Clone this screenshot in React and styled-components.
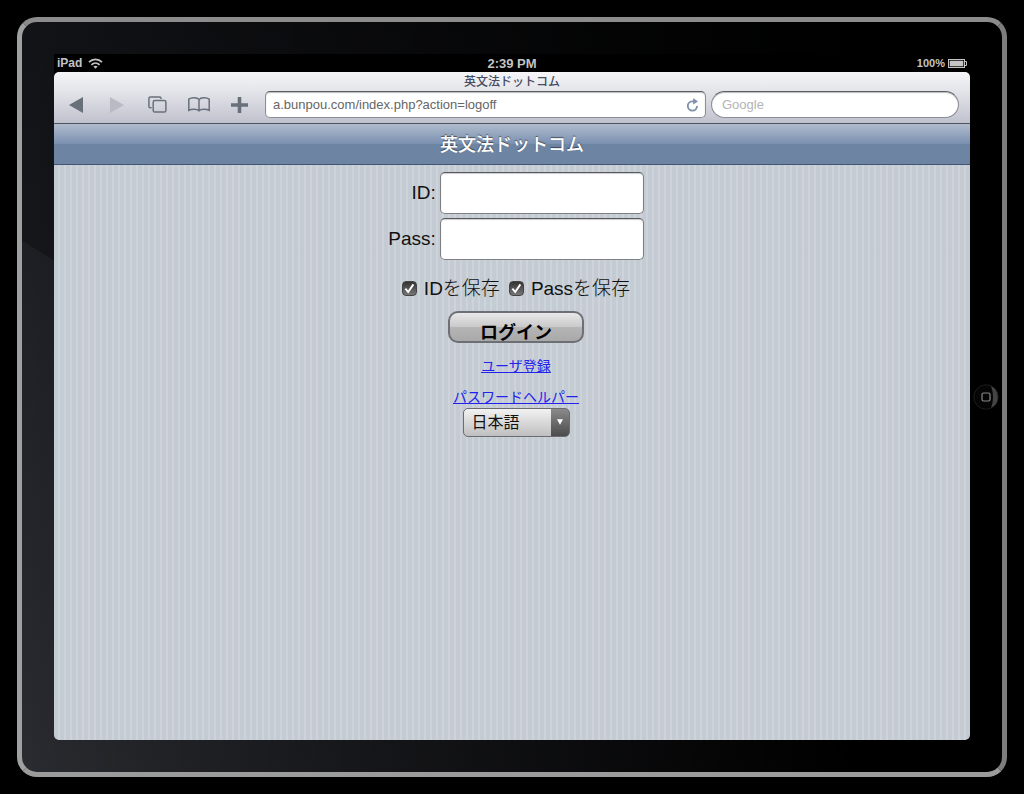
import React, { useState } from 'react'
import styled, { createGlobalStyle } from 'styled-components'

const SANS = '"Liberation Sans", "Noto Sans CJK JP", sans-serif'

const GlobalStyle = createGlobalStyle`
  * { box-sizing: border-box; }
  html, body, #root { height: 100%; }
  body {
    margin: 0;
    background: #000;
    font-family: ${SANS};
  }
`

/* Toolbar drawings */
const WifiIcon = () => (
  <svg width="15" height="11" viewBox="0 0 15 11" fill="none" stroke="#c4c4c4" strokeWidth="1.7">
    <path d="M1 4.2C4.6 0.5 10.4 0.5 14 4.2" />
    <path d="M3.4 6.8C5.8 4.4 9.2 4.4 11.6 6.8" />
    <path d="M5.4 8.6C6.6 7.5 8.4 7.5 9.6 8.6L7.5 10.8Z" fill="#c4c4c4" stroke="none" />
  </svg>
)

const BatteryIcon = () => (
  <svg width="19" height="9" viewBox="0 0 19 9">
    <rect x="0.5" y="0.5" width="16" height="8" fill="none" stroke="#c4c4c4" />
    <rect x="1.7" y="1.7" width="13.6" height="5.6" fill="#c4c4c4" />
    <path d="M17 2.5h1.5v4H17" fill="none" stroke="#c4c4c4" />
  </svg>
)

const BackIcon = () => (
  <svg width="14" height="16" viewBox="0 0 14 16"><path d="M0 8L14 0V16Z" fill="#68707a" /></svg>
)

const ForwardIcon = () => (
  <svg width="14" height="16" viewBox="0 0 14 16"><path d="M14 8L0 0V16Z" fill="#b8bbc3" /></svg>
)

const PagesIcon = () => (
  <svg width="19" height="17" viewBox="0 0 19 17" fill="none" stroke="#68707a" strokeWidth="1.5">
    <path d="M3.6 11.8H2.4Q0.9 11.8 0.9 10.3V2.4Q0.9 0.9 2.4 0.9H11.5Q13 0.9 13 2.4V3" />
    <rect x="5.2" y="4.6" width="12.7" height="11.4" rx="1.6" />
  </svg>
)

const BookIcon = () => (
  <svg width="22" height="15" viewBox="0 0 22 15" fill="none" stroke="#68707a" strokeWidth="1.5">
    <path d="M11 2.6C9.4 0.4 3.6 0.2 0.8 2.2V13.4C3.6 11.7 9.4 11.7 11 13.8C12.6 11.7 18.4 11.7 21.2 13.4V2.2C18.4 0.2 12.6 0.4 11 2.6ZM11 2.4V13.4" />
  </svg>
)

const PlusIcon = () => (
  <svg width="17" height="16" viewBox="0 0 17 16"><path d="M6.7 0h3.6v6.2H17v3.6h-6.7V16H6.7V9.8H0V6.2h6.7Z" fill="#68707a" /></svg>
)

const ReloadIcon = () => (
  <svg width="13" height="14" viewBox="0 0 13 14">
    <path d="M8.4 3.4H6.2A4.6 4.6 0 1 0 11 8" fill="none" stroke="#7e92ad" strokeWidth="1.9" />
    <path d="M7.2 0L12 3.4L7.2 6.4Z" fill="#7e92ad" />
  </svg>
)

const tools = [
  { name: 'Back', icon: <BackIcon /> },
  { name: 'Forward', icon: <ForwardIcon /> },
  { name: 'Pages', icon: <PagesIcon /> },
  { name: 'Bookmarks', icon: <BookIcon /> },
  { name: 'Add', icon: <PlusIcon /> },
]

export default function App() {
  const [saveId, setSaveId] = useState(true)
  const [savePass, setSavePass] = useState(true)

  return (
    <Desk>
      <GlobalStyle />
      <Tablet>
        <Screen>
          <StatusBar>
            <StatusGroup>iPad <WifiIcon /></StatusGroup>
            <Clock>2:39 PM</Clock>
            <StatusGroup $end>100% <BatteryIcon /></StatusGroup>
          </StatusBar>
          <Browser>
            <BrowserBar>
              <PageTitle>英文法ドットコム</PageTitle>
              <Toolbar>
                <Tools>
                  {tools.map(t => (
                    <ToolButton key={t.name} aria-label={t.name}>{t.icon}</ToolButton>
                  ))}
                </Tools>
                <AddressBox>
                  <BarInput aria-label="Address" defaultValue="a.bunpou.com/index.php?action=logoff" />
                  <ToolButton aria-label="Reload"><ReloadIcon /></ToolButton>
                </AddressBox>
                <SearchBox>
                  <BarInput aria-label="Search" placeholder="Google" />
                </SearchBox>
              </Toolbar>
            </BrowserBar>
            <Page>
              <Header>英文法ドットコム</Header>
              <LoginForm onSubmit={e => e.preventDefault()}>
                <Fields>
                  <FieldLabel htmlFor="login-id">ID:</FieldLabel>
                  <TextField id="login-id" type="text" />
                  <FieldLabel htmlFor="login-pass">Pass:</FieldLabel>
                  <TextField id="login-pass" type="password" />
                </Fields>
                <Checks>
                  <CheckLabel>
                    <CheckBox type="checkbox" checked={saveId} onChange={e => setSaveId(e.target.checked)} />
                    IDを保存
                  </CheckLabel>
                  <CheckLabel>
                    <CheckBox type="checkbox" checked={savePass} onChange={e => setSavePass(e.target.checked)} />
                    Passを保存
                  </CheckLabel>
                </Checks>
                <LoginButton type="submit">ログイン</LoginButton>
                <Links>
                  <PageLink href="#register">ユーザ登録</PageLink>
                  <PageLink href="#helper">パスワードヘルパー</PageLink>
                </Links>
                <Language aria-label="Language" defaultValue="ja">
                  <option value="ja">日本語</option>
                  <option value="en">English</option>
                </Language>
              </LoginForm>
            </Page>
          </Browser>
        </Screen>
        <HomeButton aria-label="Home">
          <svg width="26" height="26" viewBox="0 0 26 26" fill="none">
            <circle cx="13" cy="13" r="12.2" fill="#050505" stroke="#1c1c1c" />
            <path d="M18 2A12.3 12.3 0 0 1 18 24Q22 13 18 2Z" fill="#444" />
            <rect x="9" y="9" width="8" height="8" rx="1.5" stroke="#8a8a8a" strokeWidth="1.2" />
          </svg>
        </HomeButton>
      </Tablet>
    </Desk>
  )
}

/* Device */
const Desk = styled.div`
  min-height: 100%;
  display: flex;
  padding: 17px;
  background: #000;
`

/* the hard stop is the edge of the glass reflection */
const Tablet = styled.div`
  flex: 1;
  display: grid;
  grid-template-columns: 1fr 32px;
  align-items: center;
  padding: 32px 0 32px 32px;
  border: 5px solid;
  border-color: #8c8c8c #7d7d7d #9b9b9b #a0a0a0;
  border-radius: 20px;
  background:
    linear-gradient(90deg, transparent, #000 85%),
    linear-gradient(212deg, #0a0b0d, #15161a 61%, #1e1f24 61%, #2a2b30);
`

const Screen = styled.div`
  align-self: stretch;
  display: flex;
  flex-direction: column;
  background: linear-gradient(#000 30px, transparent 30px);
`

const HomeButton = styled.button`
  display: flex;
  justify-content: center;
  padding: 0;
  border: none;
  background: none;
`

const StatusBar = styled.div`
  display: grid;
  grid-template-columns: 1fr auto 1fr;
  align-items: center;
  height: 18px;
  padding: 0 3px;
  color: #c4c4c4;
  font-size: 12px;
  font-weight: bold;
`

const StatusGroup = styled.div`
  display: flex;
  align-items: center;
  justify-content: ${props => props.$end ? 'flex-end' : 'flex-start'};
  gap: ${props => props.$end ? '3px' : '6px'};
  font-size: ${props => props.$end ? '11px' : '12px'};
`

const Clock = styled.div`
  font-size: 13px;
`

/* Browser */
const Browser = styled.div`
  flex: 1;
  display: flex;
  flex-direction: column;
  overflow: hidden;
  border-radius: 5px;
`

const BrowserBar = styled.div`
  height: 52px;
  border-bottom: 1px solid #50545c;
  background: linear-gradient(#f6f6f8, #dddee4 50%, #bfc1cd);
`

const PageTitle = styled.div`
  height: 19px;
  line-height: 20px;
  text-align: center;
  color: #454b62;
  font-size: 12px;
  font-weight: 500;
`

const Toolbar = styled.div`
  display: grid;
  grid-template-columns: 200px 16fr 9fr;
  column-gap: 5px;
  padding: 0 11px 0 6px;
`

const Tools = styled.div`
  display: grid;
  grid-template-columns: repeat(5, 1fr);
  align-items: center;
  margin-left: -5px;
`

const ToolButton = styled.button`
  display: flex;
  justify-content: center;
  padding: 0;
  border: none;
  background: none;
`

const AddressBox = styled.div`
  display: flex;
  align-items: center;
  height: 27px;
  padding: 0 6px 0 7px;
  border: 1px solid #8b8d95;
  border-top-color: #5c5e64;
  border-radius: 5px;
  background: #fff;
  box-shadow: inset 0 1px 1px #bbb;
`

const SearchBox = styled(AddressBox)`
  padding: 0 10px;
  border-radius: 14px;
`

const BarInput = styled.input`
  flex: 1;
  min-width: 0;
  padding: 0;
  border: none;
  outline: none;
  background: none;
  color: #666;
  font-family: ${SANS};
  font-size: 13px;
  &::placeholder {
    color: #b4b4b4;
  }
`

/* Page */
const Page = styled.div`
  flex: 1;
  background:
    repeating-linear-gradient(90deg, transparent 0 4px, rgba(255, 255, 255, 0.16) 4px 6px),
    repeating-linear-gradient(90deg, #c3ccd3, #c6cad3 36px, #c3ccd3 72px);
`

const Header = styled.h1`
  height: 41px;
  margin: 0;
  border-bottom: 1px solid #415472;
  background: linear-gradient(#b0bccd, #7a90b0 50%, #6d84a2 50%, #6d84a2);
  color: #fff;
  font-size: 18px;
  font-weight: 500;
  line-height: 42px;
  text-align: center;
  text-shadow: 0 -1px 1px rgba(0, 0, 0, 0.5);
`

const LoginForm = styled.form`
  display: flex;
  flex-direction: column;
  align-items: center;
  padding: 7px 0 0 8px;
  color: #111;
`

const Fields = styled.div`
  display: grid;
  grid-template-columns: auto 204px;
  gap: 4px;
  align-items: center;
`

const FieldLabel = styled.label`
  font-size: 19px;
  text-align: right;
`

const TextField = styled.input`
  height: 42px;
  padding: 0 8px;
  border: 1px solid #7c7f84;
  border-top-color: #55585c;
  border-radius: 5px;
  background: #fff;
  box-shadow: inset 0 1px 1px #ccc;
  font-size: 19px;
`

const Checks = styled.div`
  display: flex;
  gap: 9px;
  height: 51px;
  padding-top: 12px;
`

const CheckLabel = styled.label`
  display: flex;
  align-items: center;
  gap: 7px;
  height: 28px;
  font-size: 19px;
  font-weight: 300;
`

const CHECK = encodeURIComponent('<svg xmlns="http://www.w3.org/2000/svg" viewBox="0 0 15 15"><path d="M3.4 7.6L6.2 11L11.4 3.4" fill="none" stroke="#fff" stroke-width="1.9"/></svg>')

const CheckBox = styled.input`
  appearance: none;
  width: 15px;
  height: 15px;
  margin: 4px 0 0;
  border: 1px solid #444;
  border-radius: 4px;
  background: linear-gradient(#333, #777);
  &:checked {
    background: url("data:image/svg+xml,${CHECK}") center / 15px 15px, linear-gradient(#333, #777);
  }
`

const LoginButton = styled.button`
  width: 136px;
  height: 32px;
  padding: 8px 0 0;
  border: 2px solid #6c7075;
  border-radius: 10px;
  background: linear-gradient(#e8e8e8, #c9c9c9 50%, #b5b5b5 50%, #a9a9a9);
  color: #000;
  font-family: ${SANS};
  font-size: 18px;
  font-weight: bold;
  line-height: 24px;
`

const Links = styled.div`
  display: flex;
  flex-direction: column;
  align-items: center;
  gap: 11px;
  padding: 13px 0 1px;
`

const PageLink = styled.a`
  color: #2222ee;
  font-size: 14px;
  line-height: 20px;
`

const ARROW = encodeURIComponent('<svg xmlns="http://www.w3.org/2000/svg" viewBox="0 0 18 28"><path d="M6 10.5H12L9 16Z" fill="#fff"/></svg>')

const Language = styled.select`
  appearance: none;
  width: 107px;
  height: 29px;
  padding: 0 26px 0 8px;
  border: 1px solid #6a6c70;
  border-radius: 5px;
  background:
    url("data:image/svg+xml,${ARROW}") right / 18px 28px no-repeat,
    linear-gradient(#8a8a8a, #4c4c4c) right / 18px 100% no-repeat,
    linear-gradient(#f2f2f2, #bfbfbf);
  color: #111;
  font-family: ${SANS};
  font-size: 16px;
`
